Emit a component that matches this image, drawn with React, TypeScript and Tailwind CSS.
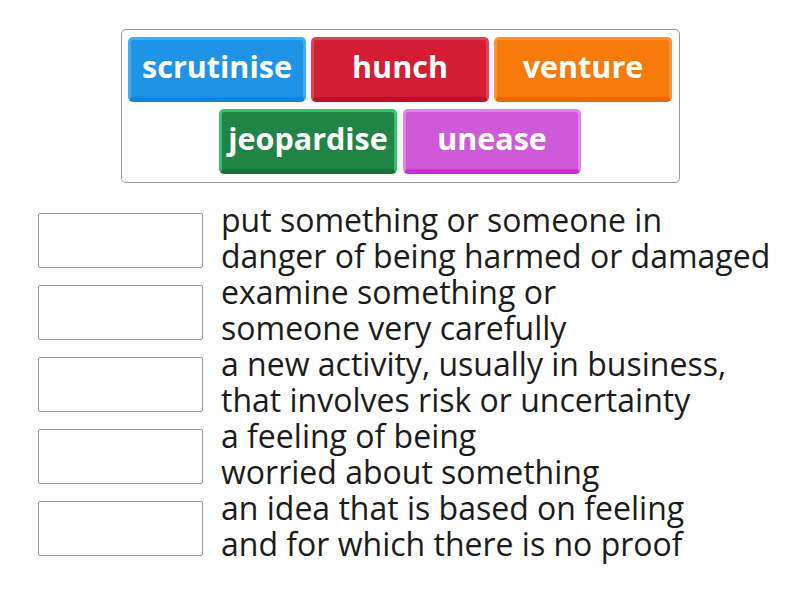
import React from 'react';

type Tile = { word: string; face: string };

const rowOne: Tile[] = [
  { word: 'scrutinise', face: 'bg-[#1f93e6] border-[#45aaee] border-b-[#1682d4]' },
  { word: 'hunch', face: 'bg-[#d41c34] border-[#df4257] border-b-[#b8142a]' },
  { word: 'venture', face: 'bg-[#f67b0b] border-[#f8923a] border-b-[#e06a04]' },
];

const rowTwo: Tile[] = [
  { word: 'jeopardise', face: 'bg-[#1f8445] border-[#33c46a] border-b-[#1a6f3a]' },
  { word: 'unease', face: 'bg-[#cf5ad9] border-[#dc86e5] border-b-[#c232cf]' },
];

const defs = [
  ['put something or someone in', 'danger of being harmed or damaged'],
  ['examine something or', 'someone very carefully'],
  ['a new activity, usually in business,', 'that involves risk or uncertainty'],
  ['a feeling of being', 'worried about something'],
  ['an idea that is based on feeling', 'and for which there is no proof'],
];

const WordTile = ({ word, face }: Tile) => (
  <div
    className={`w-[178px] h-[65px] rounded-[5px] border-[3px] border-b-[5px] flex items-center justify-center pb-[4px] text-white font-bold text-[30.5px] leading-none ${face}`}
  >
    {word}
  </div>
);

export default function App() {
  return (
    <div className="w-[800px] h-[600px] bg-white font-['Open_Sans',sans-serif]">
      <div className="pt-[29px] flex justify-center">
        <div className="w-[559px] border border-[#999] rounded-[5px] px-[7px] pt-[7px] pb-[8px] flex flex-col items-center gap-[7px]">
          <div className="flex gap-[5px]">
            {rowOne.map((t) => (
              <WordTile key={t.word} {...t} />
            ))}
          </div>
          <div className="flex gap-[6px]">
            {rowTwo.map((t) => (
              <WordTile key={t.word} {...t} />
            ))}
          </div>
        </div>
      </div>

      <div className="mt-[19px] pl-[38px] flex flex-col">
        {defs.map(([a, b]) => (
          <div key={a} className="flex items-start h-[72px]">
            <div className="mt-[11px] w-[165px] h-[55px] border border-[#999] rounded-[2px] bg-white shrink-0" />
            <div className="ml-[18px] text-[32px] leading-[36px] text-[#1c1c1c] whitespace-nowrap">
              <div>{a}</div>
              <div>{b}</div>
            </div>
          </div>
        ))}
      </div>
    </div>
  );
}
